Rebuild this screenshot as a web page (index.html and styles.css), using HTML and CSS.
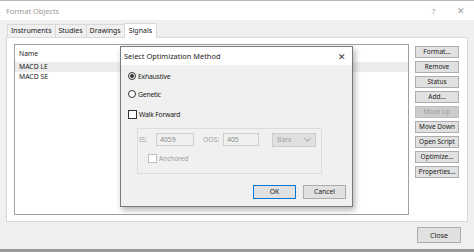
FILE: index.html
```html
<!DOCTYPE html>
<html lang="en">
<head>
  <meta charset="UTF-8" />
  <title>Format Objects</title>
  <link rel="stylesheet" href="styles.css">
</head>
<body>
  <div class="ventana">
    <div class="barra-titulo">
      <span class="titulo">Format Objects</span>
      <span class="ayuda">?</span>
      <span class="cerrar">&#x2715;</span>
    </div>

    <div class="contenido">
      <div class="pestanas">
        <div class="pestana">Instruments</div>
        <div class="pestana">Studies</div>
        <div class="pestana">Drawings</div>
        <div class="pestana activa">Signals</div>
      </div>

      <div class="panel">
        <div class="lista">
          <div class="cabecera">Name</div>
          <div class="fila seleccionada">MACD LE</div>
          <div class="fila">MACD SE</div>
        </div>
        <div class="botones">
          <button>Format...</button>
          <button>Remove</button>
          <button>Status</button>
          <button>Add...</button>
          <button disabled>Move Up</button>
          <button>Move Down</button>
          <button>Open Script</button>
          <button>Optimize...</button>
          <button>Properties...</button>
        </div>
      </div>

      <div class="pie">
        <button class="btn-cerrar">Close</button>
      </div>
    </div>

    <!-- Dialogo encima -->
    <div class="dialogo">
      <div class="dialogo-titulo">
        <span>Select Optimization Method</span>
        <span class="cerrar">&#x2715;</span>
      </div>
      <div class="dialogo-cuerpo">
        <label class="opcion"><span class="radio marcado"></span>Exhaustive</label>
        <label class="opcion"><span class="radio"></span>Genetic</label>
        <label class="opcion check-walk"><span class="check"></span>Walk Forward</label>

        <div class="grupo">
          <div class="grupo-fila">
            <span class="etiqueta">IS:</span>
            <span class="campo">4059</span>
            <span class="etiqueta oos">OOS:</span>
            <span class="campo corto">405</span>
            <span class="selector">Bars<span class="flecha"></span></span>
          </div>
          <label class="opcion anclado"><span class="check"></span>Anchored</label>
        </div>

        <div class="dialogo-botones">
          <button class="btn-ok">OK</button>
          <button>Cancel</button>
        </div>
      </div>
    </div>
  </div>
</body>
</html>
```

FILE: styles.css
```css
body {
  margin: 0;
  font-family: 'Noto Sans', 'Open Sans', sans-serif;
  font-size: 6.8px;
  color: #222;
}

.ventana {
  position: relative;
  width: 474px;
  height: 252px;
  box-sizing: border-box;
  background: #f0f0f0;
  border-top: 1px solid #b8b8b8;
  border-bottom: 3px solid #9a9a9a;
  display: flex;
  flex-direction: column;
  overflow: hidden;
}

.barra-titulo {
  height: 19px;
  background: #fff;
  display: flex;
  align-items: center;
  padding-left: 6px;
  color: #9a9a9a;
  font-size: 7.4px;
}

.barra-titulo .titulo {
  flex: 1;
}

.barra-titulo .ayuda {
  width: 27px;
  text-align: center;
}

.barra-titulo .cerrar {
  width: 27px;
  text-align: center;
  font-size: 8.5px;
}

.contenido {
  flex: 1;
  padding: 3px 6px 0 6px;
  display: flex;
  flex-direction: column;
}

.pestanas {
  display: flex;
  height: 14px;
  align-items: flex-end;
  padding-left: 1px;
  font-size: 7px;
}

.pestana {
  height: 12px;
  line-height: 12px;
  padding: 0 3px;
  border: 1px solid #d9d9d9;
  border-bottom: none;
  margin-right: -1px;
  background: #f0f0f0;
}

.pestana.activa {
  height: 14px;
  line-height: 13px;
  background: #fff;
  padding: 0 4px;
  position: relative;
  top: 1px;
}

.panel {
  height: 185px;
  box-sizing: border-box;
  background: #fff;
  border: 1px solid #d9d9d9;
  padding: 6px 7px 7px 7px;
  display: flex;
  gap: 6px;
}

.lista {
  width: 395px;
  height: 171px;
  box-sizing: border-box;
  border: 1px solid #a0a0a0;
  padding-top: 2px;
}

.cabecera {
  height: 13px;
  line-height: 13px;
  padding-left: 4px;
  margin-bottom: 2px;
}

.fila {
  height: 10px;
  line-height: 10px;
  padding-left: 4px;
}

.fila.seleccionada {
  background: #ececec;
}

.botones {
  display: flex;
  flex-direction: column;
  gap: 3px;
  padding-top: 2px;
}

button {
  font-family: inherit;
  font-size: 6.5px;
  color: #222;
  background: #e1e1e1;
  border: 1px solid #adadad;
  padding: 0;
  margin: 0;
  height: 12px;
  line-height: 10px;
  box-sizing: border-box;
  white-space: nowrap;
}

.botones button {
  width: 44px;
}

button:disabled {
  background: #cccccc;
  border-color: #bfbfbf;
  color: #a0a0a0;
}

.pie {
  display: flex;
  justify-content: flex-end;
  padding: 5px 7px 0 0;
}

.btn-cerrar {
  width: 44px;
  height: 16px;
  line-height: 14px;
  font-size: 7.2px;
}

/* Dialogo */
.dialogo {
  position: absolute;
  left: 120px;
  top: 45px;
  width: 233px;
  height: 161px;
  box-sizing: border-box;
  background: #f0f0f0;
  border: 1px solid #7a7a7a;
  box-shadow: 2px 3px 6px rgb(0 0 0 / 0.3);
  display: flex;
  flex-direction: column;
}

.dialogo-titulo {
  height: 18px;
  background: #fff;
  display: flex;
  align-items: center;
  padding-left: 3px;
  font-size: 7.4px;
}

.dialogo-titulo span:first-child {
  flex: 1;
}

.dialogo-titulo .cerrar {
  width: 20px;
  text-align: center;
  font-size: 8.5px;
  color: #333;
}

.dialogo-cuerpo {
  flex: 1;
  padding: 6px 0 0 7px;
  display: flex;
  flex-direction: column;
}

.opcion {
  display: flex;
  align-items: center;
  height: 10px;
  gap: 2px;
  margin-bottom: 8px;
  letter-spacing: -0.2px;
}

.radio {
  width: 8px;
  height: 8px;
  box-sizing: border-box;
  border: 1px solid #333;
  border-radius: 50%;
  background: #fff;
  display: flex;
  align-items: center;
  justify-content: center;
}

.radio.marcado::after {
  content: '';
  width: 4px;
  height: 4px;
  border-radius: 50%;
  background: #333;
}

.check {
  width: 9px;
  height: 9px;
  box-sizing: border-box;
  border: 1px solid #333;
  background: #fff;
}

.check-walk {
  margin-top: 2px;
  margin-bottom: 9px;
}

.grupo {
  width: 185px;
  height: 46px;
  box-sizing: border-box;
  margin-left: 9px;
  border: 1px solid #dcdcdc;
  padding: 4px 0 0 0;
  color: #a0a0a0;
}

.grupo-fila {
  display: flex;
  align-items: center;
  height: 13px;
}

.etiqueta {
  width: 17px;
  padding-left: 1px;
}

.etiqueta.oos {
  width: 20px;
  margin-left: 8px;
}

.campo {
  width: 38px;
  height: 13px;
  box-sizing: border-box;
  border: 1px solid #cfcfcf;
  padding-left: 3px;
  line-height: 11px;
  color: #8a8a8a;
}

.campo.corto {
  width: 36px;
}

.selector {
  width: 44px;
  height: 14px;
  box-sizing: border-box;
  margin-left: 13px;
  background: #e0e0e0;
  border: 1px solid #cccccc;
  padding-left: 4px;
  line-height: 12px;
  display: flex;
  justify-content: space-between;
  align-items: center;
}

.flecha {
  width: 4px;
  height: 4px;
  border-right: 1px solid #b0b0b0;
  border-bottom: 1px solid #b0b0b0;
  transform: rotate(45deg);
  margin: -2px 5px 0 0;
}

.anclado {
  margin: 7px 0 0 10px;
}

.anclado .check {
  border-color: #c0c0c0;
}

.dialogo-botones {
  display: flex;
  justify-content: flex-end;
  gap: 7px;
  padding: 11px 6px 0 0;
}

.dialogo-botones button {
  width: 43px;
  height: 14px;
  line-height: 12px;
  font-size: 6.8px;
}

.btn-ok {
  border-color: #0078d7;
}
```
